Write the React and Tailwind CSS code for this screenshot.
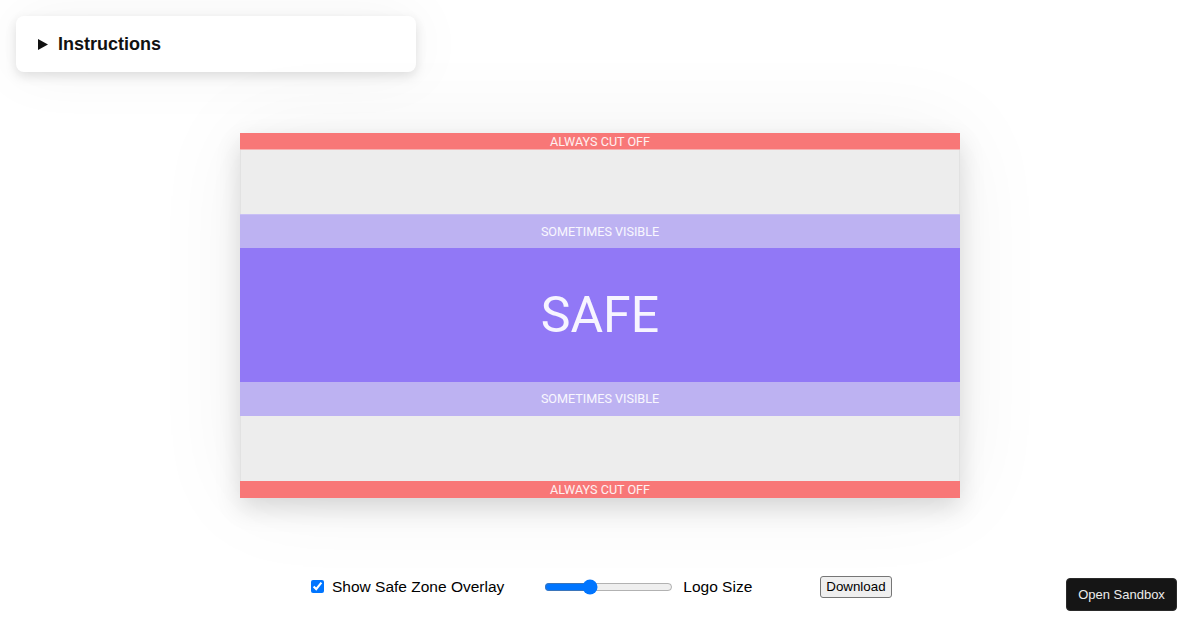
import React, { useState } from "react";

function Band({ className, children }) {
    return (
        <div className={`flex items-center justify-center text-[12.6px] uppercase text-white/90 ${className}`}>
            {children}
        </div>
    );
}

function SafeZoneCanvas({ showOverlay }) {
    return (
        <div className="w-[720px] h-[365px] flex flex-col bg-[#ededed] shadow-[0_10px_24px_rgba(0,0,0,0.14),0_0_90px_rgba(0,0,0,0.06)] font-['Roboto',sans-serif]">
            <Band className="h-[17px] pt-[2px] bg-[#f87777] border-b border-[#f6b3b3] leading-none">Always cut off</Band>
            <div className="h-[64px] border-x border-[#e2e2e2]" />
            {showOverlay && (
                <>
                    <Band className="h-[34px] pt-[1px] bg-[#bdb2f2] border-t border-[#c9c0f5]">Sometimes visible</Band>
                    <div className="h-[134px] flex items-center justify-center bg-[#9178f6] text-[50px] text-[#f7f5ff]">
                        SAFE
                    </div>
                    <Band className="h-[34px] bg-[#bdb2f2]">Sometimes visible</Band>
                </>
            )}
            <div className="h-[65px] mt-auto border-x border-[#e2e2e2]" />
            <Band className="h-[17px] pt-[2px] bg-[#f87777] leading-none">Always cut off</Band>
        </div>
    );
}

export default function App() {
    const [showOverlay, setShowOverlay] = useState(true);
    const [logoSize, setLogoSize] = useState(100);

    return (
        <div className="relative w-[1200px] h-[630px] bg-white overflow-hidden font-['Liberation_Sans',Arial,sans-serif] text-black">
            {/* Instructions panel */}
            <div className="pt-4 pl-4">
                <div className="w-[400px] h-[56px] flex items-center pl-[22px] bg-white rounded-lg shadow-[0_4px_12px_rgba(0,0,0,0.12),0_0_60px_rgba(0,0,0,0.05)]">
                    <svg width="10" height="11" viewBox="0 0 10 11" className="mr-[10px]">
                        <path d="M0 0 L10 5.5 L0 11 Z" fill="#111" />
                    </svg>
                    <span className="text-[18px] font-bold text-[#111]">Instructions</span>
                </div>
            </div>

            {/* Preview */}
            <div className="flex justify-center mt-[61px]">
                <SafeZoneCanvas showOverlay={showOverlay} />
            </div>

            {/* Controls */}
            <div className="flex items-center mt-[77px] pl-[311px] text-[15.5px]">
                <label className="flex items-center">
                    <input
                        type="checkbox"
                        checked={showOverlay}
                        onChange={(e) => setShowOverlay(e.target.checked)}
                        className="w-[13px] h-[13px] m-0 mr-[8px]"
                    />
                    Show Safe Zone Overlay
                </label>
                <input
                    type="range"
                    min="50"
                    max="200"
                    value={logoSize}
                    onChange={(e) => setLogoSize(Number(e.target.value))}
                    className="w-[129px] ml-[40px] mr-[10px]"
                />
                <span>Logo Size</span>
                <button className="ml-[68px] px-[5px] py-[2px] text-[13.33px] bg-[#efefef] border border-[#767676] rounded-[3px] leading-[16px]">
                    Download
                </button>
            </div>

            {/* Sandbox link */}
            <a
                href="#"
                className="absolute right-[23px] bottom-[19px] w-[111px] h-[33px] flex items-center justify-center rounded-[4px] bg-[#151515] border border-[#2a2a2a] text-[13px] text-[#ececec]"
            >
                Open Sandbox
            </a>
        </div>
    );
}
